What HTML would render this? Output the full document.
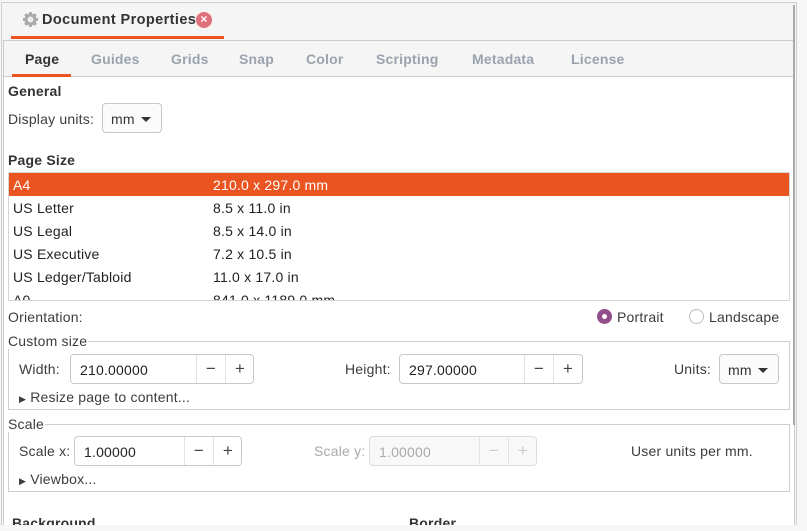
<!DOCTYPE html>
<html><head><style>
*{box-sizing:border-box;margin:0;padding:0}
body{width:807px;height:531px;background:#f6f6f6;font-family:"Liberation Sans","DejaVu Sans",sans-serif;font-size:14px;color:#3c3c3c;position:relative;overflow:hidden;letter-spacing:0.2px}
.a{position:absolute;white-space:nowrap}
.t{margin-top:1px}
.b{font-weight:bold}
.tab{position:absolute;top:51px;font-weight:bold;color:#9aa3ad;font-size:14px}
.spin{position:absolute;height:30px;border:1px solid #cdc7c2;border-radius:4px;background:#fff}
.spin .v{position:absolute;left:9px;top:7px;color:#222}
.spin .m,.spin .p{position:absolute;top:0;width:29px;height:28px;border-left:1px solid #e4e1de;text-align:center;line-height:27px;font-size:17px;color:#444}
.combo{position:absolute;height:30px;border:1px solid #cdc7c2;border-radius:4px;background:#fbfbfb;padding:7px 8px 5px;color:#333}
.tri{display:inline-block;width:0;height:0;border-left:5px solid transparent;border-right:5px solid transparent;border-top:5px solid #333;margin-left:6px;vertical-align:middle;position:relative;top:-1px}
.frame{position:absolute;border:1px solid #d0cdca}
.row{position:absolute;left:13px;height:23px;line-height:25px;color:#222}
.row span{position:absolute;left:200px}
</style></head><body>
<div class="a" style="left:1px;top:2px;width:796px;height:529px;border:1px solid #cfcfcf;border-bottom:none;background:#f5f5f5"></div>
<svg class="a" style="left:22px;top:11px" width="17" height="17" viewBox="0 0 17 17"><g fill="#aaa"><circle cx="8.5" cy="8.5" r="6"/><g stroke="#aaa" stroke-width="3"><line x1="8.5" y1="1" x2="8.5" y2="16"/><line x1="1" y1="8.5" x2="16" y2="8.5"/><line x1="3.2" y1="3.2" x2="13.8" y2="13.8"/><line x1="13.8" y1="3.2" x2="3.2" y2="13.8"/></g></g><circle cx="8.5" cy="8.5" r="3" fill="#eee"/></svg>
<div class="a b" style="left:42px;top:12px;font-size:14.5px;color:#333;letter-spacing:0.4px">Document Properties</div>
<div class="a" style="left:196px;top:12px;width:16px;height:16px;border-radius:50%;background:#e0707a;color:#fff;font-size:12px;line-height:15px;text-align:center;font-weight:bold">×</div>
<div class="a" style="left:11px;top:36px;width:213px;height:3px;background:#e95420"></div>
<div class="a" style="left:3px;top:40px;width:792px;height:491px;border:1px solid #cdcdcd;background:#fff"></div>
<div class="a" style="left:4px;top:41px;width:790px;height:36px;background:#f5f5f5;border-bottom:1px solid #cdcdcd"></div>
<div class="a" style="left:793px;top:5px;width:2px;height:420px;background:#aaa"></div>
<div class="tab" style="left:25px;color:#333">Page</div>
<div class="tab" style="left:91px">Guides</div>
<div class="tab" style="left:171px">Grids</div>
<div class="tab" style="left:239px">Snap</div>
<div class="tab" style="left:306px">Color</div>
<div class="tab" style="left:376px">Scripting</div>
<div class="tab" style="left:472px">Metadata</div>
<div class="tab" style="left:571px">License</div>
<div class="a" style="left:12px;top:74px;width:59px;height:3px;background:#e95420"></div>
<div class="a b" style="left:8px;top:83px;color:#333">General</div>
<div class="a" style="left:8px;top:111px">Display units:</div>
<div class="combo" style="left:102px;top:103px;width:60px">mm<span class="tri"></span></div>
<div class="a b" style="left:8px;top:152px;color:#333">Page Size</div>
<div class="a" style="left:8px;top:172px;width:782px;height:129px;border:1px solid #d5d5d5;overflow:hidden;background:#fff">
<div class="a" style="left:0;top:0;width:780px;height:23px;background:#e95420"></div>
<div class="row" style="top:0;left:4px;color:#fff">A4<span>210.0 x 297.0 mm</span></div>
<div class="row" style="top:23px;left:4px">US Letter<span>8.5 x 11.0 in</span></div>
<div class="row" style="top:46px;left:4px">US Legal<span>8.5 x 14.0 in</span></div>
<div class="row" style="top:69px;left:4px">US Executive<span>7.2 x 10.5 in</span></div>
<div class="row" style="top:92px;left:4px">US Ledger/Tabloid<span>11.0 x 17.0 in</span></div>
<div class="row" style="top:115px;left:4px">A0<span>841.0 x 1189.0 mm</span></div>
</div>
<div class="a" style="left:8px;top:309px">Orientation:</div>
<div class="a" style="left:597px;top:309px;width:15px;height:15px;border-radius:50%;background:#924d8b"><div class="a" style="left:5px;top:5px;width:5px;height:5px;border-radius:50%;background:#fff"></div></div>
<div class="a" style="left:617px;top:309px">Portrait</div>
<div class="a" style="left:689px;top:309px;width:15px;height:15px;border-radius:50%;border:1px solid #bbb;background:#fff"></div>
<div class="a" style="left:709px;top:309px">Landscape</div>
<div class="frame" style="left:8px;top:341px;width:782px;height:69px"></div>
<div class="a" style="left:8px;top:333px;background:#fff;padding-right:1px">Custom size</div>
<div class="a" style="left:19px;top:361px">Width:</div>
<div class="spin" style="left:70px;top:354px;width:184px"><span class="v">210.00000</span><span class="m" style="left:125px">−</span><span class="p" style="left:154px">+</span></div>
<div class="a" style="left:345px;top:361px">Height:</div>
<div class="spin" style="left:399px;top:354px;width:184px"><span class="v">297.00000</span><span class="m" style="left:124px">−</span><span class="p" style="left:153px">+</span></div>
<div class="a" style="left:674px;top:361px">Units:</div>
<div class="combo" style="left:719px;top:354px;width:60px">mm<span class="tri"></span></div>
<div class="a" style="left:19px;top:389px"><span style="font-size:9px">▶</span> Resize page to content...</div>
<div class="frame" style="left:8px;top:424px;width:782px;height:68px"></div>
<div class="a" style="left:8px;top:416px;background:#fff;padding-right:1px">Scale</div>
<div class="a" style="left:19px;top:443px">Scale x:</div>
<div class="spin" style="left:74px;top:436px;width:168px"><span class="v">1.00000</span><span class="m" style="left:109px">−</span><span class="p" style="left:138px">+</span></div>
<div class="a" style="left:314px;top:443px;color:#aaa">Scale y:</div>
<div class="spin" style="left:369px;top:436px;width:168px;background:#f8f8f8;border-color:#ddd"><span class="v" style="color:#aaa">1.00000</span><span class="m" style="left:109px;color:#ccc">−</span><span class="p" style="left:138px;color:#ccc">+</span></div>
<div class="a" style="left:631px;top:443px">User units per mm.</div>
<div class="a" style="left:19px;top:471px"><span style="font-size:9px">▶</span> Viewbox...</div>
<div class="a b" style="left:12px;top:515px;color:#333">Background</div>
<div class="a b" style="left:409px;top:515px;color:#333">Border</div>
<div class="a" style="left:0;top:525px;width:807px;height:6px;background:#f6f6f6"></div>
</body></html>
